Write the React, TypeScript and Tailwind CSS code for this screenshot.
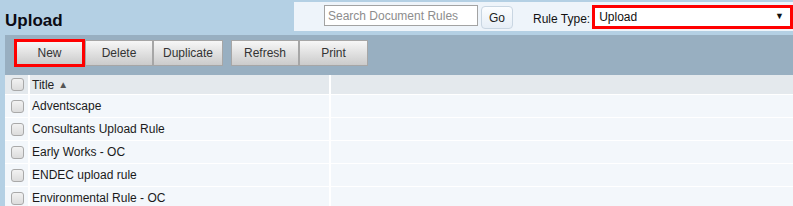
import React from "react";

const rows = [
  "Adventscape",
  "Consultants Upload Rule",
  "Early Works - OC",
  "ENDEC upload rule",
  "Environmental Rule - OC",
];

function Box() {
  return (
    <span className="block h-[13px] w-[13px] rounded-[3px] border border-[#a9a9a9] bg-gradient-to-b from-[#f2f2f2] to-[#dcdcdc]"></span>
  );
}

function ToolButton({ label, width, selected }: { label: string; width: string; selected?: boolean }) {
  return (
    <button
      className={
        "bg-gradient-to-b from-[#f7f7f7] to-[#cbcbcb] text-[12px] text-[#333] " +
        width +
        (selected ? " -mt-[1px] h-[28px] border-[3px] border-[#ff0000]" : " h-[26px] border border-[#a6a6a6]")
      }
    >
      {label}
    </button>
  );
}

export default function App() {
  return (
    <div className="w-[793px] h-[206px] overflow-hidden bg-[#b4d0e4] font-['Liberation_Sans',Arial,sans-serif] text-[#222]">
      <div className="flex h-[35px]">
        <div className="w-[294px] pl-[5px] pt-[11px]">
          <h1 className="text-[17px] font-bold leading-[20px] text-[#0b0b14]">Upload</h1>
        </div>
        <div className="mt-[2px] h-[29px] flex-1 bg-[#eef4fa] flex items-start">
          <input
            className="ml-[30px] mt-[3px] h-[21px] w-[154px] border border-[#a3a3a3] bg-white px-[3px] text-[12px] outline-none placeholder:text-[#8d8d8d]"
            placeholder="Search Document Rules"
          />
          <button className="ml-[3px] mt-[4px] h-[23px] w-[32px] rounded-[4px] border border-[#c9d6e2] bg-gradient-to-b from-[#fbfdff] to-[#e6eef6] text-[12px] text-[#222]">
            Go
          </button>
          <span className="ml-[20px] mt-[8px] text-[12px] text-[#111]">Rule Type:</span>
          <div className="ml-[2px] mt-[3px] flex h-[24px] flex-1 items-center justify-between border-[3px] border-[#ff0000] bg-white pl-[4px] pr-[6px]">
            <span className="text-[12px] text-[#111]">Upload</span>
            <span className="text-[9px] text-[#111]">▼</span>
          </div>
        </div>
      </div>
      <div className="ml-[5px]">
        <div className="flex h-[40px] items-start gap-[8px] bg-[#98afc1] pl-[9px] pt-[5px]">
          <div className="flex">
            <ToolButton label="New" width="w-[71px]" selected />
            <ToolButton label="Delete" width="w-[68px]" />
            <ToolButton label="Duplicate" width="w-[70px]" />
          </div>
          <div className="flex">
            <ToolButton label="Refresh" width="w-[68px]" />
            <ToolButton label="Print" width="w-[69px]" />
          </div>
        </div>
        <div className="grid grid-cols-[23px_299px_1fr] gap-x-[2px] gap-y-[1px] bg-white text-[12px]">
          <div className="flex h-[19px] items-center justify-center bg-[#e4e9ed] pl-[2px]">
            <Box />
          </div>
          <div className="flex h-[19px] items-center gap-[4px] bg-[#e4e9ed] pl-[2px] text-[#222]">
            Title <span className="text-[10px] text-[#555]">▲</span>
          </div>
          <div className="h-[19px] bg-[#e4e9ed]"></div>
          {rows.map((r) => (
            <React.Fragment key={r}>
              <div className="flex h-[22px] items-center justify-center bg-[#f3f7fb] pl-[2px]">
                <Box />
              </div>
              <div className="flex h-[22px] items-center bg-[#f3f7fb] pl-[2px] text-[#1a1a1a]">{r}</div>
              <div className="h-[22px] bg-[#f3f7fb]"></div>
            </React.Fragment>
          ))}
        </div>
      </div>
    </div>
  );
}
